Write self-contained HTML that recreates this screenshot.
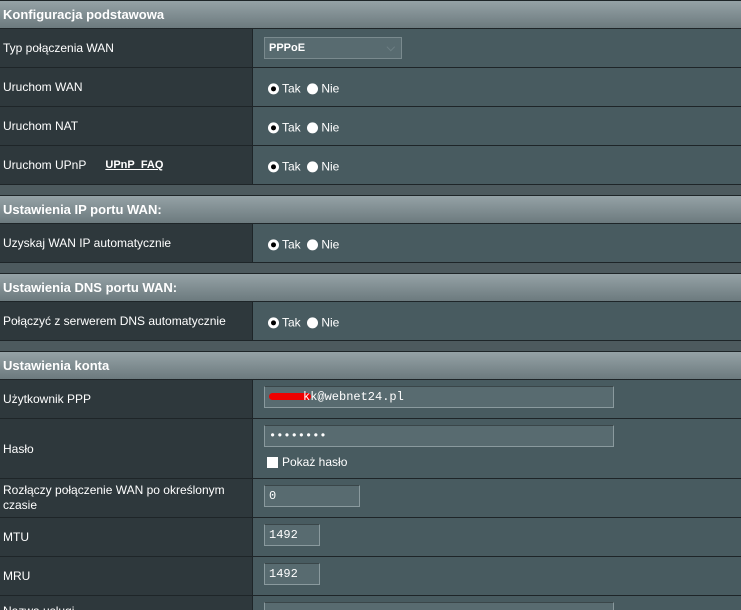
<!DOCTYPE html>
<html><head><meta charset="utf-8"><style>
html,body{margin:0;width:741px;height:610px;overflow:hidden}
body{position:relative;background:#4d5a5e;font-family:"Liberation Sans",Arial,sans-serif;font-size:12px;color:#fff}
.h{position:absolute;left:0;width:741px;height:27px;background:linear-gradient(#95a2a6,#6c7a7e);border-top:1px solid #1e2528;border-bottom:1px solid #1e2528;font-weight:bold;font-size:13px;line-height:27px;padding-left:3px;box-sizing:content-box}
.r{position:absolute;left:0;width:741px;height:39px;box-sizing:border-box;border-bottom:1px solid #1e2528;display:flex}
.l{width:253px;background:#2e383c;border-right:1px solid #1e2528;padding-left:3px;box-sizing:border-box;display:flex;align-items:center}
.v{flex:1;background:#485b60;position:relative}
.rad{position:absolute;left:15px;top:50%;transform:translateY(-40%);display:flex;align-items:center}
.rb{width:11px;height:11px;border-radius:50%;background:#fff;display:inline-block;position:relative;margin-right:3px}
.rb.on::after{content:"";position:absolute;left:3px;top:3px;width:5px;height:5px;border-radius:50%;background:#000}
.in{position:absolute;left:11px;height:22px;background:#586b70;border:1px solid #8a9a9e;border-top-color:#3a4649;box-sizing:border-box;font-family:"Liberation Mono",monospace;font-size:12px;line-height:20px;padding-left:4px}
</style></head><body>
<div class="h" style="top:0">Konfiguracja podstawowa</div>
<div class="r" style="top:29px"><div class="l">Typ połączenia WAN</div><div class="v"><div class="in" style="top:8px;width:138px;font-family:'Liberation Sans';font-weight:bold;font-size:11px;border-color:#7a8a8e">PPPoE<span style="position:absolute;right:6px;color:#6d7f84">⌵</span></div></div></div>
<div class="r" style="top:68px"><div class="l">Uruchom WAN</div><div class="v"><div class="rad"><span class="rb on"></span>Tak&nbsp;&nbsp;<span class="rb"></span>Nie</div></div></div>
<div class="r" style="top:107px"><div class="l">Uruchom NAT</div><div class="v"><div class="rad"><span class="rb on"></span>Tak&nbsp;&nbsp;<span class="rb"></span>Nie</div></div></div>
<div class="r" style="top:146px"><div class="l">Uruchom UPnP<span style="margin-left:19px;font-size:11px;font-weight:bold;text-decoration:underline">UPnP&nbsp;&nbsp;FAQ</span></div><div class="v"><div class="rad"><span class="rb on"></span>Tak&nbsp;&nbsp;<span class="rb"></span>Nie</div></div></div>
<div class="h" style="top:195px">Ustawienia IP portu WAN:</div>
<div class="r" style="top:224px"><div class="l">Uzyskaj WAN IP automatycznie</div><div class="v"><div class="rad"><span class="rb on"></span>Tak&nbsp;&nbsp;<span class="rb"></span>Nie</div></div></div>
<div class="h" style="top:273px">Ustawienia DNS portu WAN:</div>
<div class="r" style="top:302px"><div class="l">Połączyć z serwerem DNS automatycznie</div><div class="v"><div class="rad"><span class="rb on"></span>Tak&nbsp;&nbsp;<span class="rb"></span>Nie</div></div></div>
<div class="h" style="top:351px">Ustawienia konta</div>
<div class="r" style="top:380px"><div class="l">Użytkownik PPP</div><div class="v"><div class="in" style="top:6px;width:350px"><span style="display:inline-block;width:42px;height:7px;background:#e00;border-radius:4px;vertical-align:middle;margin-right:-8px"></span>kk@webnet24.pl</div></div></div>
<div class="r" style="top:419px;height:60px"><div class="l">Hasło</div><div class="v"><div class="in" style="top:6px;width:350px">••••••••</div><div style="position:absolute;left:14px;top:36px;display:flex;align-items:center"><span style="width:11px;height:11px;background:#fff;display:inline-block;margin-right:4px"></span>Pokaż hasło</div></div></div>
<div class="r" style="top:479px"><div class="l" style="line-height:15px">Rozłączy połączenie WAN po określonym czasie</div><div class="v"><div class="in" style="top:6px;width:96px">0</div></div></div>
<div class="r" style="top:518px"><div class="l">MTU</div><div class="v"><div class="in" style="top:6px;width:56px">1492</div></div></div>
<div class="r" style="top:557px"><div class="l">MRU</div><div class="v"><div class="in" style="top:6px;width:56px">1492</div></div></div>
<div class="r" style="top:596px"><div class="l" style="align-items:flex-start;padding-top:8px">Nazwa usługi</div><div class="v"><div class="in" style="top:6px;width:350px"></div></div></div>
</body></html>
